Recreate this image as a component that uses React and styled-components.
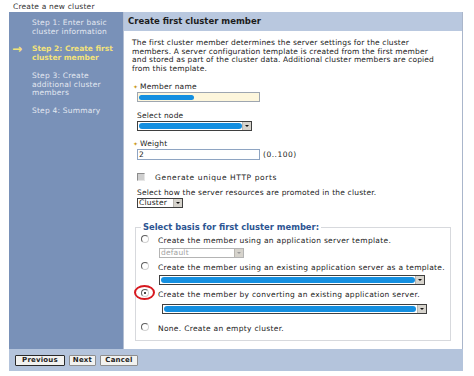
import React from "react";
import styled, { createGlobalStyle } from "styled-components";

const GlobalStyle = createGlobalStyle`
  html, body {
    margin: 0;
    padding: 0;
    background: #ffffff;
  }
  body {
    font-family: "DejaVu Sans", Verdana, sans-serif;
    font-size: 7.5px;
    letter-spacing: 0.2px;
    color: #222222;
  }
`;

const Page = styled.div`
  width: 474px;
  height: 376px;
  overflow: hidden;
  box-sizing: border-box;
  padding: 2px 0 0 9px;
`;

const Title = styled.div`
  height: 10px;
  line-height: 10px;
  padding-left: 4px;
  color: #333;
`;

const Frame = styled.div`
  width: 454px;
  display: flex;
  flex-direction: column;
`;

const Body = styled.div`
  display: flex;
  height: 337px;
`;

const Sidebar = styled.div`
  width: 114px;
  flex: none;
  background: #7991b8;
  padding-top: 7px;
  box-sizing: border-box;
`;

const Step = styled.div`
  display: flex;
  margin-bottom: 9px;
  line-height: 8.7px;
  color: ${(p) => (p.$current ? "#f3e27a" : "#e3e8f1")};
  font-weight: ${(p) => (p.$current ? "bold" : "normal")};
  letter-spacing: ${(p) => (p.$current ? "0" : "0.2px")};
`;

const Marker = styled.div`
  width: 23px;
  flex: none;
  padding-left: 3px;
  box-sizing: border-box;
  font-size: 12px;
  line-height: 8.7px;
  font-weight: bold;
`;

const Main = styled.div`
  flex: 1;
  display: flex;
  flex-direction: column;
  background: #fff;
  border-left: 1px solid #b3bfd3;
  border-right: 1px solid #aab6cb;
`;

const Header = styled.div`
  height: 19px;
  line-height: 19px;
  background: #b9c8df;
  padding-left: 4px;
  font-size: 8.5px;
  letter-spacing: 0;
  font-weight: bold;
  color: #1c1c1c;
`;

const Content = styled.div`
  padding: 8px 0 0 8px;
`;

const Para = styled.p`
  margin: 0;
  line-height: 8.7px;
  letter-spacing: 0.15px;
`;

const Form = styled.div`
  padding-left: 5px;
  margin-top: 8px;
`;

const Label = styled.div`
  line-height: 9px;
  margin-top: ${(p) => p.$gap || 0}px;
`;

const Star = styled.span`
  display: inline-block;
  width: 7px;
  margin-left: -4px;
  font-size: 6px;
  color: #c99a1a;
`;

const TextBox = styled.div`
  width: 123px;
  height: ${(p) => p.$h || 10}px;
  flex: none;
  box-sizing: border-box;
  margin-top: ${(p) => p.$top || 0}px;
  border: 1px solid ${(p) => p.$border || "#9ea6b0"};
  background: ${(p) => p.$bg || "#fff"};
  display: flex;
  align-items: center;
  padding-left: 1px;
  line-height: 8px;
`;

const Redact = styled.div`
  width: ${(p) => p.$w}px;
  height: ${(p) => p.$h || 5}px;
  background: #148fe0;
  border-radius: 3px;
`;

const SelectBox = styled.div`
  width: ${(p) => p.$w}px;
  height: 10px;
  box-sizing: border-box;
  margin-top: ${(p) => p.$top || 0}px;
  margin-left: ${(p) => p.$left || 0}px;
  border: 1px solid ${(p) => (p.$disabled ? "#b4b4b4" : "#3f3f3f")};
  background: #fff;
  display: flex;
  align-items: center;
  color: ${(p) => (p.$disabled ? "#a3a3a3" : "#222")};
`;

const SelectValue = styled.div`
  flex: 1;
  display: flex;
  align-items: center;
  padding-left: 1px;
  line-height: 8px;
  overflow: hidden;
`;

const DropButton = styled.div`
  width: 8px;
  height: 8px;
  flex: none;
  background: #d6d3cc;
  border-left: 1px solid #b9b6b0;
  display: flex;
  align-items: center;
  justify-content: center;
  &::after {
    content: "";
    border-left: 2px solid transparent;
    border-right: 2px solid transparent;
    border-top: 2px solid ${(p) => (p.$disabled ? "#9a9a9a" : "#111")};
  }
`;

const Row = styled.div`
  display: flex;
  align-items: center;
  margin-top: ${(p) => p.$top || 0}px;
`;

const Hint = styled.span`
  margin-left: 3px;
  letter-spacing: 0.5px;
`;

const Checkbox = styled.div`
  width: 8px;
  height: 8px;
  box-sizing: border-box;
  background: #cfcfcf;
  border: 1px solid;
  border-color: #8c8c8c #e6e6e6 #e6e6e6 #8c8c8c;
  flex: none;
`;

const CheckText = styled.span`
  margin-left: 10px;
  line-height: 9px;
  margin-top: 2px;
  letter-spacing: 0.6px;
`;

const Fieldset = styled.fieldset`
  margin: 14px 0 0 3px;
  width: 316px;
  box-sizing: border-box;
  border: 1px solid #d7d9dd;
  padding: 4px 0 7px 5px;
`;

const Legend = styled.legend`
  padding: 0 2px;
  font-size: 8.4px;
  letter-spacing: 0;
  font-weight: bold;
  line-height: 10px;
  color: #2d5592;
`;

const Option = styled.div`
  margin-top: ${(p) => p.$top || 0}px;
`;

const OptionRow = styled.div`
  display: flex;
  align-items: flex-start;
  line-height: 9px;
`;

const Radio = styled.div`
  position: relative;
  width: 8px;
  height: 8px;
  box-sizing: border-box;
  margin-top: -1px;
  border-radius: 50%;
  border: 1px solid;
  border-color: #5f5f5f #d2d2d2 #d2d2d2 #5f5f5f;
  background: #fff;
  flex: none;
  display: flex;
  align-items: center;
  justify-content: center;
  &::before {
    content: "";
    display: ${(p) => (p.$checked ? "block" : "none")};
    width: 2px;
    height: 2px;
    border-radius: 50%;
    background: #111;
  }
`;

const Circled = styled.div`
  position: absolute;
  left: -8px;
  top: -5px;
  width: 21px;
  height: 15px;
  box-sizing: border-box;
  border: 2.5px solid #d7191f;
  border-radius: 50%;
`;

const OptionText = styled.span`
  margin-left: 9px;
  letter-spacing: 0.3px;
  white-space: nowrap;
`;

const OptionBody = styled.div`
  padding-left: 18px;
`;

const ButtonBar = styled.div`
  height: 22px;
  background: #b4c4dc;
  display: flex;
  align-items: center;
  gap: 4px;
  padding-left: 6px;
`;

const Button = styled.button`
  width: ${(p) => p.$w}px;
  height: 11px;
  padding: 0;
  box-sizing: border-box;
  font-family: "DejaVu Sans", Verdana, sans-serif;
  font-size: 7px;
  font-weight: bold;
  letter-spacing: 0.2px;
  line-height: 8px;
  color: #1e1e1e;
  background: #f2f2f0;
  border: ${(p) => (p.$default ? "1.5px solid #2a2a2a" : "1px solid #8e8e8e")};
  border-radius: 1px;
`;

function Select({ w, top, left, disabled, children }) {
  return (
    <SelectBox $w={w} $top={top} $left={left} $disabled={disabled}>
      <SelectValue>{children}</SelectValue>
      <DropButton $disabled={disabled} />
    </SelectBox>
  );
}

export default function App() {
  return (
    <>
      <GlobalStyle />
      <Page>
        <Title>Create a new cluster</Title>
        <Frame>
          <Body>
            <Sidebar>
              <Step>
                <Marker />
                <div>
                  Step 1: Enter basic
                  <br />
                  cluster information
                </div>
              </Step>
              <Step $current>
                <Marker>→</Marker>
                <div>
                  Step 2: Create first
                  <br />
                  cluster member
                </div>
              </Step>
              <Step>
                <Marker />
                <div>
                  Step 3: Create
                  <br />
                  additional cluster
                  <br />
                  members
                </div>
              </Step>
              <Step>
                <Marker />
                <div>Step 4: Summary</div>
              </Step>
            </Sidebar>
            <Main>
              <Header>Create first cluster member</Header>
              <Content>
                <Para>
                  The first cluster member determines the server settings for the cluster
                  <br />
                  members. A server configuration template is created from the first member
                  <br />
                  and stored as part of the cluster data. Additional cluster members are copied
                  <br />
                  from this template.
                </Para>
                <Form>
                  <Label>
                    <Star>✦</Star>Member name
                  </Label>
                  <TextBox $top={1.5} $bg="#fdf6dc">
                    <Redact $w={55} />
                  </TextBox>

                  <Label $gap={8.5}>Select node</Label>
                  <Select w={115} top={1}>
                    <Redact $w={104} $h={6} />
                  </Select>

                  <Label $gap={8.5}>
                    <Star>✦</Star>Weight
                  </Label>
                  <Row $top={1}>
                    <TextBox $h={11} $border="#8ea4c2">2</TextBox>
                    <Hint>(0..100)</Hint>
                  </Row>

                  <Row $top={11}>
                    <Checkbox />
                    <CheckText>Generate unique HTTP ports</CheckText>
                  </Row>

                  <Label $gap={6}>Select how the server resources are promoted in the cluster.</Label>
                  <Select w={46} top={1}>
                    Cluster
                  </Select>
                </Form>

                <Fieldset>
                  <Legend>Select basis for first cluster member:</Legend>
                  <Option>
                    <OptionRow>
                      <Radio />
                      <OptionText>Create the member using an application server template.</OptionText>
                    </OptionRow>
                    <OptionBody>
                      <Select w={85} top={2.5} disabled>
                        default
                      </Select>
                    </OptionBody>
                  </Option>
                  <Option $top={5.5}>
                    <OptionRow>
                      <Radio />
                      <OptionText>
                        Create the member using an existing application server as a template.
                      </OptionText>
                    </OptionRow>
                    <OptionBody>
                      <Select w={266} top={2.5}>
                        <Redact $w={254} $h={6} />
                      </Select>
                    </OptionBody>
                  </Option>
                  <Option $top={5.5}>
                    <OptionRow>
                      <Radio $checked>
                        <Circled />
                      </Radio>
                      <OptionText>Create the member by converting an existing application server.</OptionText>
                    </OptionRow>
                    <OptionBody>
                      <Select w={265} top={4.5} left={3}>
                        <Redact $w={252} $h={6} />
                      </Select>
                    </OptionBody>
                  </Option>
                  <Option $top={10.5}>
                    <OptionRow>
                      <Radio />
                      <OptionText>None. Create an empty cluster.</OptionText>
                    </OptionRow>
                  </Option>
                </Fieldset>
              </Content>
            </Main>
          </Body>
          <ButtonBar>
            <Button $w={50} $default>
              Previous
            </Button>
            <Button $w={27}>Next</Button>
            <Button $w={38}>Cancel</Button>
          </ButtonBar>
        </Frame>
      </Page>
    </>
  );
}
